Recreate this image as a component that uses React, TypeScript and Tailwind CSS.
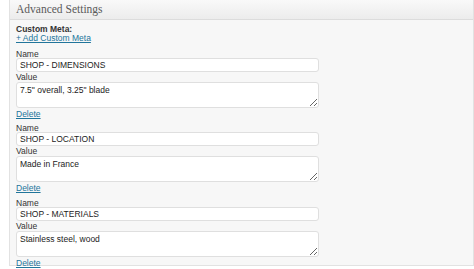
const fields = [
  { name: "SHOP - DIMENSIONS", value: '7.5" overall, 3.25" blade' },
  { name: "SHOP - LOCATION", value: "Made in France" },
  { name: "SHOP - MATERIALS", value: "Stainless steel, wood" },
];

function MetaField({ name, value }: { name: string; value: string }) {
  return (
    <div className="flex flex-col text-[8.5px]">
      <label className="h-[8px] leading-[8px] text-[#333]">Name</label>
      <input
        readOnly
        value={name}
        className="h-[14px] w-[303px] rounded-[3px] border border-[#dfdfdf] bg-white px-[3px] text-[8.5px] leading-[12px] text-[#222] outline-none"
      />
      <label className="mt-[1px] h-[9px] leading-[9px] text-[#333]">Value</label>
      <textarea
        readOnly
        value={value}
        className="h-[26px] w-[303px] resize-y rounded-[3px] border border-[#dfdfdf] bg-white px-[3px] pt-[2px] text-[8.5px] leading-[11px] text-[#222] outline-none"
      />
      <div className="mt-[1px] h-[10px] leading-[10px]">
        <a href="#" className="text-[#21759b] underline">
          Delete
        </a>
      </div>
    </div>
  );
}

export default function App() {
  return (
    <div className="h-[269px] w-[474px] overflow-hidden bg-white font-['Liberation_Sans',Arial,sans-serif]">
      <div className="ml-[9px] h-[266px] border-x border-b border-[#e2e2e2] bg-[#f7f7f7]">
        <div className="flex h-[20px] items-center border-b border-[#dcdcdc] bg-gradient-to-b from-[#f9f9f9] to-[#ececec] pl-[6px]">
          <h3 className="font-['Liberation_Serif',Georgia,serif] text-[11.5px] font-normal text-[#5a5a5a]">
            Advanced Settings
          </h3>
        </div>
        <div className="flex flex-col px-[6px] pt-[4px] text-[8.5px]">
          <div className="font-bold leading-[10px] text-[#333]">Custom Meta:</div>
          <a href="#" className="w-fit leading-[9px] text-[#21759b] underline">
            + Add Custom Meta
          </a>
          <div className="mt-[7px] flex flex-col gap-[5px]">
            {fields.map((f, i) => (
              <div key={f.name} className={i === 2 ? "mt-[1px]" : ""}>
                <MetaField name={f.name} value={f.value} />
              </div>
            ))}
          </div>
        </div>
      </div>
    </div>
  );
}
